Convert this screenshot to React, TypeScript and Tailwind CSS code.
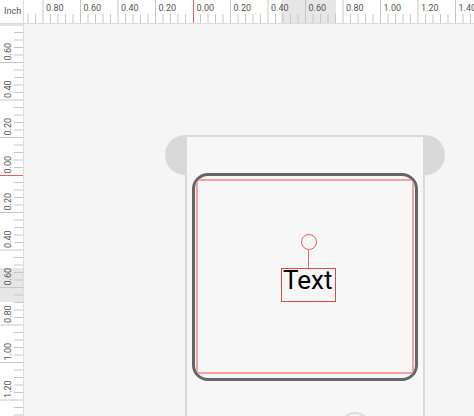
import React from "react";

const PX_PER_STEP = 7.5; // 0.04 inch
const ORIGIN_X = 193;
const ORIGIN_Y = 175;
const RULER = 24;

function label(k: number) {
  return Math.abs((k / 5) * 0.2).toFixed(2);
}

function TopRuler() {
  const ticks = [];
  for (let k = -30; k <= 40; k++) {
    const x = ORIGIN_X + k * PX_PER_STEP - RULER;
    if (x < -2 || x > 452) continue;
    const major = k % 5 === 0;
    if (k === 0) continue;
    ticks.push(
      <g key={k}>
        <line
          x1={x}
          x2={x}
          y1={major ? 0 : 14}
          y2={23}
          stroke="#c6c6c6"
          strokeWidth={1}
        />
        {major && (
          <text x={x + 3} y={11} fontSize={9} fill="#555">
            {label(k)}
          </text>
        )}
      </g>,
    );
  }
  const zx = ORIGIN_X - RULER + 0.5;
  return (
    <svg width={450} height={23} className="block">
      <rect x={281 - RULER} y={0} width={55} height={23} fill="#e6e6e6" />
      {ticks}
      <line x1={zx} x2={zx} y1={0} y2={23} stroke="#ef5b5b" strokeWidth={1} />
      <text x={zx + 3} y={11} fontSize={9} fill="#555">
        0.00
      </text>
    </svg>
  );
}

function LeftRuler() {
  const ticks = [];
  for (let k = -20; k <= 32; k++) {
    const y = ORIGIN_Y + k * PX_PER_STEP - RULER;
    if (y < -2 || y > 394) continue;
    const major = k % 5 === 0;
    if (k === 0) continue;
    ticks.push(
      <g key={k}>
        <line
          y1={y}
          y2={y}
          x1={major ? 0 : 14}
          x2={23}
          stroke="#c6c6c6"
          strokeWidth={1}
        />
        {major && (
          <text
            x={0}
            y={0}
            fontSize={9}
            fill="#555"
            transform={`translate(11 ${y - 2}) rotate(-90)`}
          >
            {label(k)}
          </text>
        )}
      </g>,
    );
  }
  const zy = ORIGIN_Y - RULER + 0.5;
  return (
    <svg width={23} height={392} className="block">
      <rect x={0} y={268 - RULER} width={23} height={34} fill="#e6e6e6" />
      {ticks}
      <line y1={zy} y2={zy} x1={0} x2={23} stroke="#ef5b5b" strokeWidth={1} />
      <text
        x={0}
        y={0}
        fontSize={9}
        fill="#555"
        transform={`translate(11 ${zy - 2}) rotate(-90)`}
      >
        0.00
      </text>
    </svg>
  );
}

export default function App() {
  return (
    <div className="w-[474px] h-[416px] overflow-hidden bg-[#f5f5f5] grid grid-cols-[24px_450px] grid-rows-[24px_392px] font-['Roboto',sans-serif]">
      {/* corner */}
      <div className="bg-white border-r border-b border-[#dcdcdc] flex items-center pl-[4px] text-[9px] text-[#555]">
        Inch
      </div>
      <div className="bg-white border-b border-[#dcdcdc]">
        <TopRuler />
      </div>
      <div className="bg-white border-r border-[#dcdcdc]">
        <LeftRuler />
      </div>

      {/* canvas: objects sit at their design coordinates */}
      <div className="relative overflow-hidden">
        {/* label stock */}
        <div className="absolute left-[141px] top-[111px] w-[20px] h-[40px] rounded-l-full bg-[#d9d9d9]" />
        <div className="absolute left-[401px] top-[111px] w-[20px] h-[40px] rounded-r-full bg-[#d9d9d9]" />
        <div className="absolute left-[161px] top-[111px] w-[240px] h-[300px] bg-[#f7f7f7] border-2 border-b-0 border-[#dadada]" />

        {/* label frame */}
        <div className="absolute left-[168px] top-[149px] w-[226px] h-[208px] rounded-[16px] border-[3px] border-[#666] overflow-hidden">
          <div className="absolute left-[1px] top-[3px] w-[218px] h-[195px] border-2 border-[#f5a3a0]" />
        </div>

        {/* text object */}
        <div className="absolute left-[257px] top-[210px] w-[55px] flex flex-col items-center">
          <div className="w-[16px] h-[16px] rounded-full border-[1.5px] border-[#e06060] bg-[#f7f7f7]" />
          <div className="w-[1.5px] h-[18px] bg-[#e06a6a]" />
          <div className="w-[55px] h-[34px] border border-[#d94b4b] pl-[1px]">
            <span className="block text-[26px] leading-[22px] text-black whitespace-nowrap">
              Text
            </span>
          </div>
        </div>

        {/* handle peeking in at the bottom */}
        <div className="absolute left-[316px] top-[388px] w-[30px] h-[30px] rounded-full border-2 border-[#dcdcdc]" />
      </div>
    </div>
  );
}
